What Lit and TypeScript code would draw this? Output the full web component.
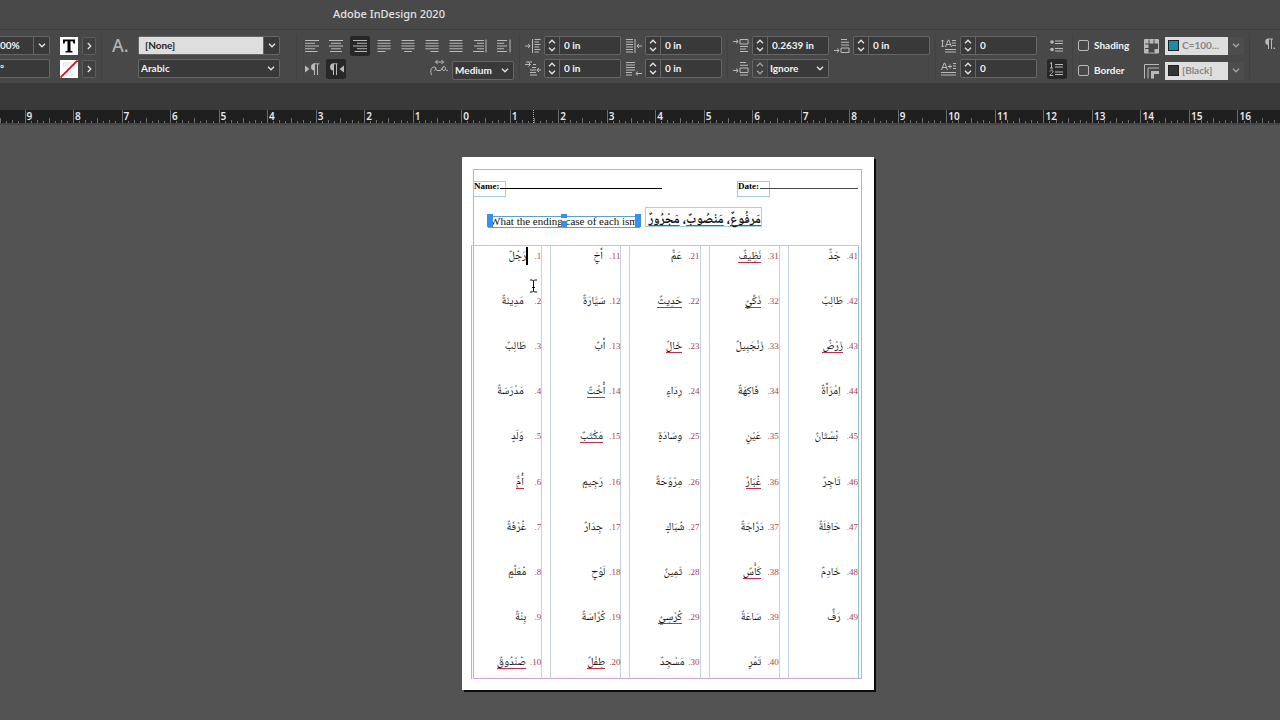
import { LitElement, html, svg, css } from "lit";
import { customElement, state } from "lit/decorators.js";
import { classMap } from "lit/directives/class-map.js";

interface Word {
  text: string;
  flagged?: boolean;
}

const w = (text: string, flagged = false): Word => ({ text, flagged });
const S = "\u00a0";

const columns: Word[][] = [
  [
    w("رَجُلٌ"), w(S + "مَدِينَةٌ"), w("طَالِبٌ"), w(S + "مَدْرَسَةٌ"), w(S + "وَلَدٍ"),
    w(S + "أُمٌّ", true), w("غُرْفَةٌ"), w("مُعَلِّمٍ"), w("بِنْةٌ"), w("صُنْدُوقٌ", true),
  ],
  [
    w(S + "أَخٍ"), w("سَيَّارَةٌ"), w("أَبٌ"), w("أُخْتٌ", true), w(S + "مَكْتَبٌ", true),
    w(S + "رَجِيمٍ"), w(S + "جِدَارٌ"), w("لَوْحٍ"), w("كُرَّاسَةٌ"), w("طِفْلٌ", true),
  ],
  [
    w(S + "عَمٌّ"), w(S + "حَدِيثٌ", true), w(S + "خَالٌ", true), w(S + "رِدَاءٍ"), w(S + "وِسَادَةٍ"),
    w(S + "مِرْوَحَةٌ"), w("شُبَاكٍ"), w(S + "ثَمِينٌ"), w(S + "كُرْسِيٌ", true), w("مَسْجِدٌ"),
  ],
  [
    w(S + "نَظِيفٌ", true), w(S + "ذَكِّيٌ", true), w("زَنْجَبِيلٌ"), w(S + S + "فَاكِهَةٌ"), w(S + "عَيْنٍ"),
    w(S + "غُبَارٌ", true), w("دَرَّاجَةٌ"), w(S + "كَأْسٌ", true), w(S + "سَاعَةٌ"), w(S + "تَمْرٍ"),
  ],
  [
    w(S + "جَدٌّ"), w("طَالِبٌ"), w("زَرْضٌ", true), w(S + "اِمْرَأَةٌ"), w(S + S + "بُسْتَانٌ"),
    w(S + "تَاجِرٌ"), w(S + "حَافِلَةٌ"), w(S + "خَادِمٌ"), w(S + "رَفٌّ"),
  ],
];

const rulerUnits = Array.from({ length: 27 }, (_, i) => (i === 0 ? "" : Math.abs(i - 10)));
const eighths = ["full", "small", "mid", "small", "half", "small", "mid", "small"];

const icon = (d: string, width = 16, height = 16, extra: unknown = "") => html`
  <svg class="icon" width=${width} height=${height} viewBox="0 0 ${width} ${height}" aria-hidden="true">
    <path d=${d} />${extra}
  </svg>
`;

const chevron = html`
  <svg class="chev" width="8" height="5" viewBox="0 0 8 5" aria-hidden="true"><path d="M1 .8 4 3.8 7 .8" /></svg>
`;
const chevronUp = html`
  <svg class="chev" width="8" height="5" viewBox="0 0 8 5" aria-hidden="true"><path d="M1 4.2 4 1.2 7 4.2" /></svg>
`;
const chevronRight = html`
  <svg class="chev" width="5" height="8" viewBox="0 0 5 8" aria-hidden="true"><path d="M.8 1 3.8 4 .8 7" /></svg>
`;

const alignments: { name: string; d: string }[] = [
  { name: "Align left", d: "M0 1.5h14M0 4.25h10M0 7h14M0 9.75h10M0 12.5h12.5" },
  { name: "Align center", d: "M0 1.5h14M2 4.25h10M0 7h14M2 9.75h10M1 12.5h12" },
  { name: "Align right", d: "M0 1.5h14M4 4.25h10M0 7h14M4 9.75h10M1.5 12.5h12.5" },
  { name: "Justify, last line left", d: "M.5 1.5h13M.5 4.25h13M.5 7h13M.5 9.75h13M.5 12.5h8" },
  { name: "Justify, last line centered", d: "M.5 1.5h13M.5 4.25h13M.5 7h13M.5 9.75h13M3 12.5h8" },
  { name: "Justify, last line right", d: "M.5 1.5h13M.5 4.25h13M.5 7h13M.5 9.75h13M5.5 12.5h8" },
  { name: "Justify all lines", d: "M.5 1.5h13M.5 4.25h13M.5 7h13M.5 9.75h13M.5 12.5h13" },
  { name: "Align towards spine", d: "M1 1.5h10M4 4.25h7M1 7h10M4 9.75h7M0 12.5h11M13 .5v13" },
  { name: "Align away from spine", d: "M0 1.5h10M0 4.25h7M0 7h10M0 9.75h7M0 12.5h10M13 .5v13" },
];

const icons = {
  leftIndent: "M0 8h5M3 6l2.2 2L3 10M7.5 1v14M9.5 1.5h6M9.5 4h4.5M9.5 6.5h6M9.5 9h4.5M9.5 11.5h6M9.5 14h4.5",
  firstLine: "M0 3.5h5.5M3.5 1.5l2 2-2 2M1 1h6M7 6.5h4M5 9h6M5 11.5h6M5 14h7M16 9h-4M14 7l-2.2 2 2.2 2M8 3.5h3",
  rightIndent: "M0 1.5h7M0 4h7M0 6.5h7M0 9h7M0 11.5h7M0 14h7M9 1v14M16 8h-5M13 6l-2.2 2 2.2 2",
  lastLine: "M0 1.5h9M0 4h9M0 6.5h9M0 9h9M0 11.5h6M0 14h6M16 12.5h-6M12 10.5l-2.2 2 2.2 2",
  before: "M0 3.5h5M3 1.5l2.2 2-2.2 2M7 1.5h8v4.5h-8zM7 8.5h8M7 11h6M7 13.5h8",
  after: "M0 12.5h5M3 10.5l2.2 2-2.2 2M7 10h8v4.5h-8zM7 1.5h6M7 4.25h8M7 7h8",
  between: "M0 9.5h5M3 7.5l2.2 2-2.2 2M7 7h8v4.5h-8zM7 1.5h6M7 4.25h8M7 14h8",
  kashida: "M1.5 16C0 12 1 8 4 8c3 0 2 3.500 0 3.500M5.500 8.500c0 2 1 3 2.500 3h2c2 0 2-4 4-4s2 4 0 4-2-2-1-3M15.500 10.500c.5 1 1.500 1 2.500 1M5.500 3h8M7.500 1l-2 2 2 2M11.500 1l2 2-2 2",
  bullets: "M6 3h8M6 5.5h8M6 10.5h8M6 13h8",
  numbers: "M6 3.5h8M6 6h8M6 11h8M6 13.5h8",
};

@customElement("app-root")
export class AppRoot extends LitElement {
  @state() private align = 2;
  @state() private rtl = true;

  static styles = css`
    :host {
      display: flex;
      flex-direction: column;
      height: 100vh;
      min-height: 720px;
      overflow: hidden;
      background: #535353;
      color: #f2f2f2;
      font: 700 10px/14px Lato, "Open Sans", sans-serif;
    }
    * { box-sizing: border-box; }
    button, input, select {
      margin: 0;
      padding: 0;
      border: 0;
      border-radius: 0;
      background: none;
      color: inherit;
      font: inherit;
      appearance: none;
      min-width: 0;
    }
    svg { display: block; flex: none; }
    .icon { fill: none; stroke: #b9b9b9; stroke-width: 1; }
    .icon .solid { fill: #b9b9b9; stroke: none; }
    .icon .gap { stroke: #484848; }
    .chev { fill: none; stroke: #e4e4e4; stroke-width: 1.3; }

    .titlebar {
      height: 29px;
      flex: none;
      padding-left: 333px;
      font: 500 11px/28px "Noto Sans", sans-serif;
      background: #494949;
      color: #e2e2e2;
      white-space: nowrap;
    }
    .titlebar h1 { margin: 0; font: inherit; }
    .controls {
      flex: none;
      display: flex;
      align-items: flex-start;
      height: 54px;
      padding: 6px 4px 0 0;
      border-top: 1px solid #3b3b3b;
      background: #484848;
    }
    .controls > * { flex: none; }
    .group { display: grid; grid-template-rows: 19px 19px; row-gap: 4px; }
    .loose { row-gap: 6px; }
    .row { display: flex; align-items: center; gap: 3px; }
    .start { align-items: flex-start; }
    .sep { width: 1px; height: 45px; margin: -2px 5px 0; background: #414141; }
    .gap-s { margin-left: 5px; }
    .gap-m { margin-left: 10px; }
    .gap-l { margin-left: 16px; }

    .field {
      display: flex;
      height: 19px;
      width: 77px;
      border: 1px solid #666;
      border-radius: 2px;
      background: #393939;
    }
    .field input, .field select { flex: 1; width: 0; height: 17px; padding: 0 0 2px 4px; }
    .field.clipped { width: 50px; border-left: 0; border-radius: 0 2px 2px 0; }
    .field.clipped input { padding-left: 0; }
    .spin {
      display: grid;
      width: 15px;
      grid-template-rows: 1fr 1fr;
      border-right: 1px solid #666;
    }
    .spin button, .drop, .more { display: grid; place-items: center; }
    .drop { width: 16px; border-left: 1px solid #666; }
    .inert .spin { background: #484848; opacity: .6; }
    .field.wide { width: 142px; }
    .field.light input { background: #dedede; color: #262626; padding-left: 6px; }
    .pick { position: relative; display: grid; grid-template-columns: 1fr 16px; align-items: center; }
    .field.pick select { grid-area: 1 / 1 / 2 / 3; width: 100%; padding-left: 2px; }
    .pick > .chev { grid-area: 1 / 2; pointer-events: none; justify-self: center; }
    .medium { width: 62px; margin-top: 2px; }
    .ignore { grid-template-columns: 15px 1fr 16px; }
    .ignore .spin { height: 17px; }
    .field.ignore select { grid-area: 1 / 2 / 2 / 4; }
    .ignore > .chev { grid-area: 1 / 3; }
    .swatch { width: 18px; height: 18px; background: #fff; }
    .more { width: 14px; height: 18px; border: 1px solid #5c5c5c; border-radius: 2px; background: #404040; }
    .styles { grid-template-columns: 16px 142px; column-gap: 10px; }
    .styles .field { grid-column: 2; }
    .char { font: 500 18px/19px "Noto Sans", sans-serif; color: #b0b0b0; }
    .tools { gap: 4px; }
    .tool { display: grid; place-items: center; width: 20px; height: 20px; border-radius: 2px; }
    .on { background: #272727; }
    .push { margin-left: auto; }
    .check { display: flex; align-items: center; gap: 5px; width: 61px; height: 18px; }
    .check input { width: 11px; height: 11px; border: 1px solid #b8b8b8; border-radius: 2px; }
    .color { display: grid; grid-template-columns: 63px 16px; height: 18px; margin-left: 1px; align-items: center; background: #4d4d4d; }
    .color select { grid-area: 1 / 1; height: 18px; padding: 0 0 1px 17px; background: #dedede; color: #858585; }
    .chip { grid-area: 1 / 1; z-index: 1; width: 11px; height: 11px; margin-left: 3px; border: 1px solid #222; pointer-events: none; }
    .teal { background: #1590a8; }
    .black { background: #333; }
    .color > .chev { grid-area: 1 / 2; justify-self: center; stroke: #a5a5a5; pointer-events: none; }

    .tabs { flex: none; height: 27px; background: #3a3a3a; }
    .ruler {
      flex: none;
      position: relative;
      height: 15px;
      overflow: hidden;
      background: #1f1f1f;
      border-bottom: 2px solid #474747;
    }
    .units { display: grid; grid-template-columns: repeat(27, 1fr); width: 1310px; margin-left: -24px; height: 13px; }
    .unit { display: grid; }
    .ticks { grid-area: 1 / 1; display: grid; grid-template-columns: repeat(8, 1fr); align-items: end; }
    .ticks i { border-left: 1px solid #6c6c6c; height: 2px; }
    .ticks .full { height: 13px; }
    .ticks .half { height: 5px; }
    .ticks .mid { height: 3px; }
    .label { grid-area: 1 / 1; padding-left: 2px; font: 600 10px/12px "Noto Sans", sans-serif; color: #e8e8e8; }
    .marker { position: absolute; left: 533px; top: 0; height: 13px; border-left: 1px dotted #aaa; }

    .canvas { flex: 1; position: relative; padding: 32px 0 0 462px; }
    .page {
      width: 412px;
      padding: 12px 12px 11px 11px;
      background: #fff;
      box-shadow: 2px 2px 0 #0c0c0c;
      color: #111;
      font: 12px/22px "Liberation Serif", serif;
    }
    .margins { border: 1px solid #d3a3d3; }
    .fields { display: flex; justify-content: space-between; padding: 11px 3px 0 0; }
    .blank { display: flex; align-items: flex-start; margin-left: -1px; }
    .blank label { width: 33px; height: 16px; border: 1px solid #9fcbe0; font: bold 9px/9px "Liberation Serif", serif; color: #000; white-space: nowrap; }
    .blank input { width: 162px; height: 8px; margin-left: -6px; border-bottom: 1px solid #000; }
    .blank .date { width: 98px; margin-left: -10px; border-color: #444; }
    .heading { display: flex; align-items: flex-start; gap: 5px; padding: 10px 0 0 14px; height: 48px; }
    .subject {
      position: relative;
      width: 152px;
      height: 12px;
      margin: 9px 0 0;
      border: 1px solid #5a9fe0;
      font: 11px/9px "Liberation Serif", serif;
      text-align: center;
      white-space: nowrap;
    }
    .subject p { margin: 0; }
    .handle { position: absolute; top: -3px; width: 6px; height: 13px; background: #3590ee; }
    .h-left { left: -2px; }
    .h-mid { left: 72px; background: linear-gradient(#3590ee 4px, transparent 4px 7px, #3590ee 7px); }
    .h-right { right: -2px; }
    .cases { width: 117px; height: 20px; margin: 0; border: 1px solid #9fd3e6; font: bold 13px/25px "Noto Naskh Arabic", "Amiri", "DejaVu Sans", sans-serif; white-space: nowrap; }
    .cases span {
      text-decoration: underline #d0304a 1px;
      text-underline-offset: 2px;
      text-decoration-skip-ink: none;
    }
    .flagged { display: inline-block; background: linear-gradient(#e0203c, #e0203c) 0 16px / 100% 1px no-repeat; }
    .list {
      display: grid;
      grid-template-columns: repeat(5, 1fr);
      gap: 8px;
      height: 434px;
      margin: 0 2px -1px -3px;
      border-top: 1px solid #a5d5dc;
    }
    .col {
      display: grid;
      grid-template-rows: repeat(10, 22px);
      align-content: space-between;
      margin: 0;
      padding: 0 0 5px;
      list-style: none;
      border: solid #c3d3e2;
      border-width: 0 1px;
    }
    .col:first-child { border-left-color: #8ccbd8; }
    .col:last-child { border-right-color: #8cbfdc; }
    .item { position: relative; display: flex; white-space: nowrap; }
    .num { min-width: 15px; font-size: 9px; line-height: 20px; color: #b13a4c; }
    .word { font: 11px/22px "Noto Naskh Arabic", "Amiri", "DejaVu Sans", sans-serif; }
    .caret { position: absolute; right: 13px; top: 1px; width: 2px; height: 18px; background: #000; }
    .pointer { position: absolute; left: 529px; top: 154px; fill: none; stroke: #111; }
  `;

  private stepper(label: string, value: string) {
    return html`
      <div class="field">
        <span class="spin">
          <button aria-label="Increase ${label}">${chevronUp}</button>
          <button aria-label="Decrease ${label}">${chevron}</button>
        </span>
        <input aria-label=${label} .value=${value} />
      </div>
    `;
  }

  private controls() {
    return html`
      <div class="controls" role="toolbar" aria-label="Paragraph formatting controls">
        <div class="group">
          <div class="field clipped">
            <input aria-label="Vertical scale" value="00%" /><button class="drop" aria-label="Scale presets">${chevron}</button>
          </div>
          <div class="field clipped"><input aria-label="Skew" value="°" /></div>
        </div>
        <div class="group gap-m">
          <div class="row tools">
            <svg class="swatch" viewBox="0 0 18 18" aria-label="Fill">
              <path d="M3 2.5h12v4h-1.5l-.8-2.2h-2.2v9.4l2 .5v1.3h-7v-1.3l2-.5v-9.4H5.3l-.8 2.2H3z" fill="#000" />
            </svg>
            <button class="more" aria-label="Fill options">${chevronRight}</button>
          </div>
          <div class="row tools">
            <svg class="swatch" viewBox="0 0 18 18" aria-label="Stroke">
              <path d="M3.5 3h11v3.5h-1.5l-.6-1.8h-2v9l1.8.5v1h-6.4v-1l1.8-.5v-9h-2L5 6.5H3.5z" fill="none" stroke="#d5d5d5" stroke-width=".7" />
              <path d="M.5 17.5 17.5.5" stroke="#c8141e" stroke-width="1.8" />
            </svg>
            <button class="more" aria-label="Stroke options">${chevronRight}</button>
          </div>
        </div>
        <span class="sep"></span>
        <div class="group styles gap-s">
          <span class="char">A.</span>
          <div class="field wide light">
            <input aria-label="Character style" value="[None]" /><button class="drop" aria-label="Style list">${chevron}</button>
          </div>
          <div class="field wide pick">
            <select aria-label="Language"><option>Arabic</option></select>${chevron}
          </div>
        </div>
        <span class="sep gap-l"></span>
        <div class="group">
          <div class="row tools">
            ${alignments.map(
              (a, i) => html`
                <button class=${classMap({ tool: true, on: i === this.align })} aria-label=${a.name} @click=${() => (this.align = i)}>
                  ${icon(a.d, 14, 14)}
                </button>
              `
            )}
          </div>
          <div class="row start tools">
            <button class=${classMap({ tool: true, on: !this.rtl })} aria-label="Left-to-right paragraph" @click=${() => (this.rtl = false)}>
              ${icon("M9.5 2v11M12.5 2v11M8 1.8h6.5", 15, 14, svg`<path class="solid" d="M0 3.5 4.5 7 0 10.5zM9.5 1.5v7a3.5 3.5 0 0 1 0-7z"/>`)}
            </button>
            <button class=${classMap({ tool: true, on: this.rtl })} aria-label="Right-to-left paragraph" @click=${() => (this.rtl = true)}>
              ${icon("M4.5 2v11M7.5 2v11M3.5 1.8h5", 15, 14, svg`<path class="solid" d="M15 3.5 10.5 7 15 10.5zM4.5 1.5v7a3.5 3.5 0 0 1 0-7z"/>`)}
            </button>
            <span class="push">${icon(icons.kashida, 18, 18)}</span>
            <div class="field pick medium">
              <select aria-label="Kashida width"><option>Medium</option></select>${chevron}
            </div>
          </div>
        </div>
        <span class="sep"></span>
        <div class="group">
          <div class="row">${icon(icons.leftIndent)}${this.stepper("Left indent", "0 in")}</div>
          <div class="row">${icon(icons.firstLine)}${this.stepper("First line indent", "0 in")}</div>
        </div>
        <div class="group gap-s">
          <div class="row">${icon(icons.rightIndent)}${this.stepper("Right indent", "0 in")}</div>
          <div class="row">${icon(icons.lastLine)}${this.stepper("Last line indent", "0 in")}</div>
        </div>
        <span class="sep"></span>
        <div class="group">
          <div class="row">${icon(icons.before)}${this.stepper("Space before", "0.2639 in")}</div>
          <div class="row">
            ${icon(icons.between)}
            <div class="field pick ignore inert">
              <span class="spin">
                <button disabled aria-label="Increase spacing">${chevronUp}</button>
                <button disabled aria-label="Decrease spacing">${chevron}</button>
              </span>
              <select aria-label="Space between paragraphs using same style"><option>Ignore</option></select>${chevron}
            </div>
          </div>
        </div>
        <div class="group gap-s">
          <div class="row">${icon(icons.after)}${this.stepper("Space after", "0 in")}</div>
        </div>
        <span class="sep"></span>
        <div class="group">
          <div class="row">
            ${icon("M1.5 2v7M0 3.5 1.5 2 3 3.5M0 7.5 1.5 9 3 7.5M11 2.5h4M11 5h4M11 7.5h4M4 11.5h11M4 14h11", 16, 16, svg`<path d="M4.5 9 7.2 2h.6L10.5 9M5.5 6.5h4"/>`)}
            ${this.stepper("Drop cap lines", "0")}
          </div>
          <div class="row">
            ${icon("M.5 9 3.2 2h.6L6.5 9M1.5 6.5h4M7 5.5h4M9 3.5v4M12 2.5h3M12 5h3M12 7.5h3M0 11.5h15M0 14h15")}
            ${this.stepper("Drop cap characters", "0")}
          </div>
        </div>
        <div class="group gap-m">
          <button class="tool" aria-label="Bulleted list">
            ${icon(icons.bullets, 16, 16, svg`<circle class="solid" cx="3" cy="4" r="1.8"/><circle class="solid" cx="3" cy="11.5" r="1.8"/>`)}
          </button>
          <button class="tool on" aria-label="Numbered list">
            ${icon(icons.numbers, 16, 16, svg`<path d="M1 2.5 2.5 1.5V7M1 7h3M1 10.5c0-2 3-2 3 0 0 1.5-3 2.5-3 4h3.2"/>`)}
          </button>
        </div>
        <span class="sep"></span>
        <div class="group loose">
          <label class="check"><input type="checkbox" />Shading</label>
          <label class="check"><input type="checkbox" />Border</label>
        </div>
        <div class="group loose gap-s">
          <div class="row tools">
            <svg class="icon" width="16" height="16" viewBox="0 0 16 16" aria-hidden="true">
              <path d="M.5 1.5h14v13.5H.5z" />
              <path class="solid" d="M1 2h4v4H1zM10 2h4v4h-4zM5 2h5v4H5zM1 6h4v4H1zM1 11h4v4H1zM10 11h4v4h-4z" />
              <path class="gap" d="M5 1.500V15M10 1.500V15M1 6h13M1 10.500h13" />
            </svg>
            <div class="color">
              <span class="chip teal"></span>
              <select aria-label="Shading color"><option>C=100...</option></select>${chevron}
            </div>
          </div>
          <div class="row tools">
            ${icon("M.5 15.5V1.5h14.5M4 15.5V5h11", 16, 16, svg`<path d="M8.5 15.5V9.5h6.5" stroke-width="3"/>`)}
            <div class="color">
              <span class="chip black"></span>
              <select aria-label="Border color"><option>[Black]</option></select>${chevron}
            </div>
          </div>
        </div>
        <span class="sep"></span>
        <div class="group push">
          ${icon("M4.5 3v10M7.5 3v10M4 3h5", 12, 16, svg`<path class="solid" d="M4.5 2.5v6.5a3.2 3.2 0 0 1 0-6.5zM9.5 11.5h1.5v1.5h-1.5z"/>`)}
        </div>
      </div>
    `;
  }

  private ruler() {
    return html`
      <div class="ruler">
        <div class="units">
          ${rulerUnits.map(
            (n) => html`
              <div class="unit">
                <div class="ticks">${eighths.map((t) => html`<i class=${t}></i>`)}</div>
                <span class="label">${n}</span>
              </div>
            `
          )}
        </div>
        <span class="marker"></span>
      </div>
    `;
  }

  private page() {
    return html`
      <article class="page">
        <div class="margins">
          <div class="fields">
            <div class="blank"><label for="name">Name:</label><input id="name" /></div>
            <div class="blank"><label for="date">Date:</label><input id="date" class="date" /></div>
          </div>
          <div class="heading">
            <div class="subject">
              <p>What the ending case of each ism</p>
              <span class="handle h-left"></span><span class="handle h-mid"></span><span class="handle h-right"></span>
            </div>
            <h2 class="cases" dir="rtl" lang="ar"><span>مَرفُوعٌ</span>، <span>مَنْصُوبٌ</span>، <span>مَجْرُورٌ</span></h2>
          </div>
          <div class="list">
            ${columns.map(
              (words, c) => html`
                <ol class="col" dir="rtl" lang="ar">
                  ${words.map(
                    (word, r) => html`
                      <li class="item">
                        <span class="num">${c * 10 + r + 1}.</span>
                        <span class="word">${word.text.startsWith(S) ? word.text.slice(0, word.text.lastIndexOf(S) + 1) : ""}<span class=${classMap({ flagged: !!word.flagged })}>${word.text.replaceAll(S, "")}</span></span>
                        ${c === 0 && r === 0 ? html`<span class="caret"></span>` : ""}
                      </li>
                    `
                  )}
                </ol>
              `
            )}
          </div>
        </div>
      </article>
    `;
  }

  render() {
    return html`
      <header class="titlebar"><h1>Adobe InDesign 2020</h1></header>
      ${this.controls()}
      <div class="tabs"></div>
      ${this.ruler()}
      <main class="canvas">
        ${this.page()}
        <svg class="pointer" width="9" height="14" viewBox="0 0 9 14" aria-hidden="true">
          <path d="M1 1h2.5l1 1 1-1H8M4.5 2v10M1 13h2.5l1-1 1 1H8M3 8.5h3" />
        </svg>
      </main>
    `;
  }
}
